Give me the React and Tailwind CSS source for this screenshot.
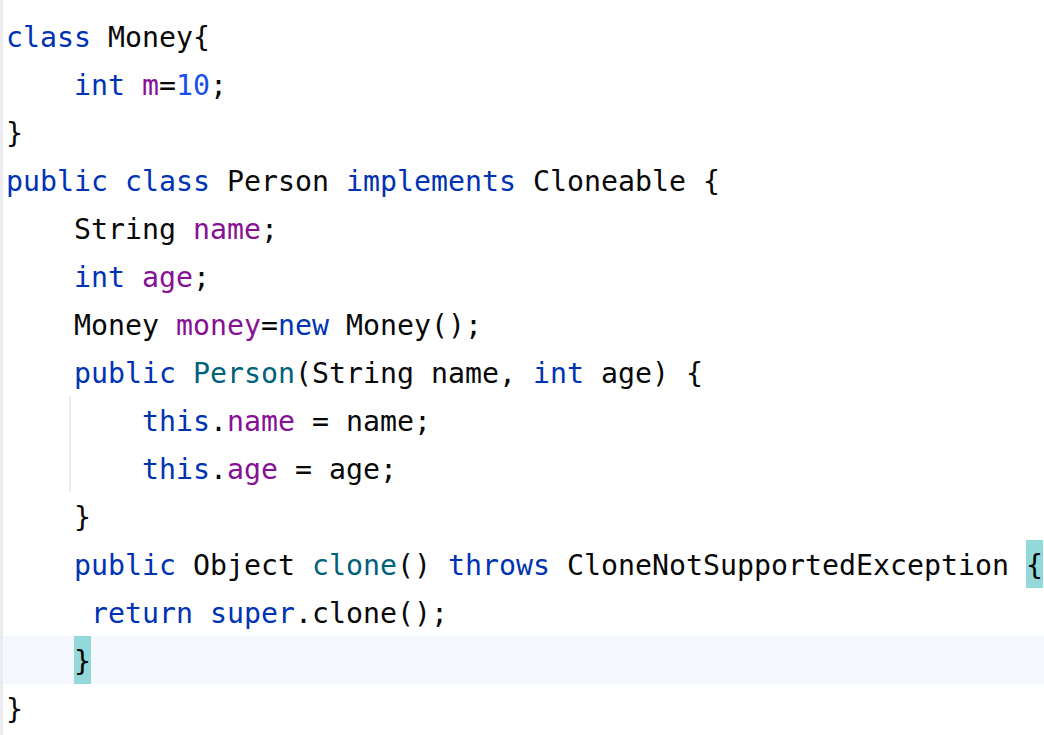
import React from "react";

const K = ({ children }) => <span className="text-[#0033b3]">{children}</span>;
const F = ({ children }) => <span className="text-[#871094]">{children}</span>;
const N = ({ children }) => <span className="text-[#1750eb]">{children}</span>;
const M = ({ children }) => <span className="text-[#00627a]">{children}</span>;
const B = ({ children }) => (
  <span className="inline-block h-[48px] -mt-[4px] leading-[52px] bg-[#93d9d9] align-top">{children}</span>
);

const Line = ({ children, current }) => (
  <div
    className={
      "h-[48px] pt-[4px] leading-[44px] whitespace-pre pl-[3px] " +
      (current ? "bg-[#f5f8fe]" : "")
    }
  >
    {children}
  </div>
);

export default function App() {
  return (
    <div className="w-[1044px] h-[735px] bg-white flex overflow-hidden">
      <div className="w-[3px] h-full bg-[#ebecf0] shrink-0" />
      <div
        className="relative flex-1 pt-[12px] text-[#080808] text-[28.24px]"
        style={{ fontFamily: "'DejaVu Sans Mono', monospace" }}
      >
        <div className="absolute left-[66px] top-[396px] h-[96px] w-[2px] bg-[#ebecf0]" />
        <Line>
          <K>class</K> Money{"{"}
        </Line>
        <Line>
          {"    "}
          <K>int</K> <F>m</F>=<N>10</N>;
        </Line>
        <Line>{"}"}</Line>
        <Line>
          <K>public</K> <K>class</K> Person <K>implements</K> Cloneable {"{"}
        </Line>
        <Line>
          {"    "}String <F>name</F>;
        </Line>
        <Line>
          {"    "}
          <K>int</K> <F>age</F>;
        </Line>
        <Line>
          {"    "}Money <F>money</F>=<K>new</K> Money();
        </Line>
        <Line>
          {"    "}
          <K>public</K> <M>Person</M>(String name, <K>int</K> age) {"{"}
        </Line>
        <Line>
          {"        "}
          <K>this</K>.<F>name</F> = name;
        </Line>
        <Line>
          {"        "}
          <K>this</K>.<F>age</F> = age;
        </Line>
        <Line>{"    }"}</Line>
        <Line>
          {"    "}
          <K>public</K> Object <M>clone</M>() <K>throws</K> CloneNotSupportedException <B>{"{"}</B>
        </Line>
        <Line>
          {"     "}
          <K>return</K> <K>super</K>.clone();
        </Line>
        <Line current>
          {"    "}
          <B>{"}"}</B>
        </Line>
        <Line>{"}"}</Line>
      </div>
    </div>
  );
}
